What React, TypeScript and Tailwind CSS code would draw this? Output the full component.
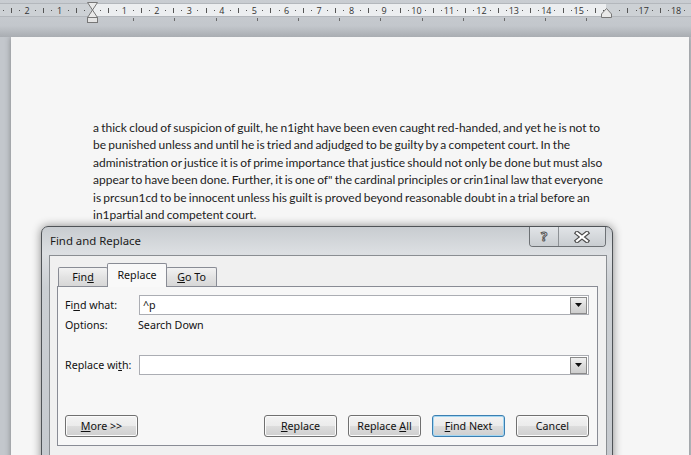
import React from 'react';

const CM = 32.45;
const ZERO = 92;

const lines = [
  'a thick cloud of suspicion of guilt, he n1ight have been even caught red-handed, and yet he is not to',
  'be punished unless and until he is tried and adjudged to be guilty by a competent court. In the',
  'administration or justice it is of prime importance that justice should not only be done but must also',
  'appear to have been done. Further, it is one of" the cardinal principles or crin1inal law that everyone',
  'is prcsun1cd to be innocent unless his guilt is proved beyond reasonable doubt in a trial before an',
  'in1partial and competent court.',
];

function Ruler() {
  const marks: React.ReactNode[] = [];
  for (let q = -12; q <= 78; q++) {
    const x = ZERO + (q / 4) * CM;
    if (x < 2 || x > 689 || q === 0 || q === 64) continue;
    const r = ((q % 4) + 4) % 4;
    if (r === 0) {
      marks.push(
        <span
          key={q}
          className="absolute top-0 -translate-x-1/2 text-[9px] leading-[13px] text-[#333]"
          style={{ left: x }}
        >
          {Math.abs(q / 4)}
        </span>,
      );
    } else if (r === 2) {
      marks.push(<span key={q} className="absolute top-[4px] h-[5px] w-px bg-[#555]" style={{ left: x }} />);
    } else {
      marks.push(<span key={q} className="absolute top-[6px] h-px w-px bg-[#555]" style={{ left: x }} />);
    }
  }
  const tabs = Array.from({ length: 12 }, (_, k) => ZERO + (k + 1) * 41.2);

  return (
    <div className="relative h-[37px] bg-[linear-gradient(to_bottom,#c9cdd2,#c3c7cc_70%,#a9adb2)]">
      <div className="absolute left-0 right-0 top-[3px] flex h-[14px] border-y border-[#b3b7bc]">
        <div className="w-[92px] bg-[#cdd1d5]" />
        <div className="w-[514px] bg-[#eceef0]" />
        <div className="flex-1 bg-[#cdd1d5]" />
        <div className="absolute inset-0 font-['Open_Sans',sans-serif]">{marks}</div>
      </div>
      {tabs.map((x) => (
        <span key={x} className="absolute top-[18px] h-[3px] w-px bg-[#6a6a6a]" style={{ left: x }} />
      ))}
      <svg className="absolute left-[87px] top-[2px]" width="11" height="21" viewBox="0 0 11 21">
        <path d="M0.5 0.5 H10.5 L5.5 8 Z" fill="#e9e9e9" stroke="#777" />
        <path d="M5.5 8 L10.5 15.5 H0.5 Z" fill="#e9e9e9" stroke="#777" />
        <rect x="0.5" y="15.5" width="10" height="5" fill="#e4e4e4" stroke="#777" />
      </svg>
      <svg className="absolute left-[601px] top-[8px]" width="11" height="10" viewBox="0 0 11 10">
        <path d="M0.5 9.5 V6 L5.5 0.5 L10.5 6 V9.5 Z" fill="#e9e9e9" stroke="#777" />
      </svg>
    </div>
  );
}

function DropButton() {
  return (
    <div className="my-px mr-px flex h-[17px] w-[17px] items-center justify-center border border-[#8a8a8a] bg-[linear-gradient(to_bottom,#f1f1f1,#dcdcdc_50%,#cdcdcd)]">
      <svg width="7" height="4" viewBox="0 0 7 4">
        <path d="M0 0 H7 L3.5 4 Z" fill="#111" />
      </svg>
    </div>
  );
}

function Btn({ children, primary }: { children: React.ReactNode; primary?: boolean }) {
  return (
    <div
      className={`flex h-[22px] w-[73px] items-center justify-center rounded-[3px] border bg-[linear-gradient(to_bottom,#f3f3f3,#ebebeb_50%,#dddddd_50%,#cfcfcf)] ${
        primary
          ? 'border-[#3c7fb1] shadow-[inset_0_0_0_1px_#a3d7f3]'
          : 'border-[#707070] shadow-[inset_0_0_0_1px_#fbfbfb]'
      }`}
    >
      {children}
    </div>
  );
}

function Dialog() {
  return (
    <div className="absolute left-[41px] top-[226px] flex h-[240px] w-[572px] flex-col rounded-t-[7px] border border-[#4f5357] bg-[linear-gradient(to_bottom,#c8ccd0,#dcdfe2_26px,#cbcfd3_60px,#c6cacf)] pl-[7px] pr-[5px] font-['Noto_Sans',sans-serif] text-[10.7px] text-[#111] shadow-[0_0_10px_rgba(0,0,0,0.45)]">
      <div className="flex h-[28px] items-center pl-px text-[11.4px] text-[#1a1a1a]">Find and Replace</div>
      <div className="absolute right-[6px] top-0 flex h-[20px] overflow-hidden rounded-b-[4px] border border-t-0 border-[#6d7175]">
        <div className="flex w-[29px] items-center justify-center border-r border-[#8d9195] bg-[linear-gradient(to_bottom,#e1e4e7,#c9cdd1)] text-[13px] font-bold text-white [-webkit-text-stroke:1px_#555]">
          ?
        </div>
        <div className="flex w-[46px] items-center justify-center bg-[linear-gradient(to_bottom,#e1e4e7,#c9cdd1)]">
          <svg width="16" height="12" viewBox="0 0 16 12">
            <path d="M3 2 L13 10 M13 2 L3 10" stroke="#4d4d4d" strokeWidth="4.5" strokeLinecap="square" />
            <path d="M3 2 L13 10 M13 2 L3 10" stroke="#fff" strokeWidth="2.2" strokeLinecap="square" />
          </svg>
        </div>
      </div>

      <div className="flex-1 border border-[#8a8e92] bg-[#f0f0f0] pl-[7px] pr-[8px] pt-[7px]">
        <div className="ml-px flex h-[23px] items-end">
          <div className="flex h-[19px] w-[50px] items-center justify-center rounded-t-[2px] border border-b-0 border-[#898c95] bg-[linear-gradient(to_bottom,#f2f2f2,#e3e3e3_50%,#d7d7d7)]">
            Fin<u>d</u>
          </div>
          <div className="relative z-10 -mb-px -ml-px flex h-[24px] w-[60px] items-start justify-center rounded-t-[2px] border border-b-0 border-[#898c95] bg-[#f9f9f9] pt-[3px]">
            Replace
          </div>
          <div className="-ml-px flex h-[19px] w-[51px] items-center justify-center rounded-t-[2px] border border-b-0 border-[#898c95] bg-[linear-gradient(to_bottom,#f2f2f2,#e3e3e3_50%,#d7d7d7)]">
            <u>G</u>o To
          </div>
        </div>
        <div className="flex h-[160px] flex-col border border-[#898c95] bg-[#f7f7f7] pl-[7px] pr-[8px] pt-[8px]">
          <div className="flex h-[20px] items-center">
            <span className="w-[74px]">
              Fi<u>n</u>d what:
            </span>
            <div className="flex h-[20px] flex-1 items-center border border-[#abadb3] bg-white">
              <span className="flex-1 pl-[3px]">^p</span>
              <DropButton />
            </div>
          </div>
          <div className="flex h-[20px] items-center">
            <span className="w-[73px]">Options:</span>
            <span>Search Down</span>
          </div>
          <div className="mt-[20px] flex h-[20px] items-center">
            <span className="w-[74px]">
              Replace wi<u>t</u>h:
            </span>
            <div className="flex h-[20px] flex-1 items-center border border-[#abadb3] bg-white">
              <span className="flex-1" />
              <DropButton />
            </div>
          </div>
          <div className="mt-[40px] flex justify-between">
            <Btn>
              <span>
                <u>M</u>ore &gt;&gt;
              </span>
            </Btn>
            <div className="flex gap-[11px]">
              <Btn>
                <span>
                  <u>R</u>eplace
                </span>
              </Btn>
              <Btn>
                <span>
                  Replace <u>A</u>ll
                </span>
              </Btn>
              <Btn primary>
                <span>
                  <u>F</u>ind Next
                </span>
              </Btn>
              <Btn>
                <span>Cancel</span>
              </Btn>
            </div>
          </div>
        </div>
      </div>
    </div>
  );
}

export default function App() {
  return (
    <div className="relative h-[455px] w-[691px] overflow-hidden bg-[#c3c7cc] font-['Lato',sans-serif]">
      <Ruler />
      <div className="flex pl-[11px] pr-[2px]">
        <div className="h-[430px] flex-1 bg-[#f6f6f6] pl-[82px] pt-[82px] text-[12px] leading-[17.4px] text-[#1c1c1c] shadow-[0_0_6px_rgba(0,0,0,0.35)] [word-spacing:-0.8px]">
          {lines.map((l) => (
            <div key={l} className="whitespace-nowrap">
              {l}
            </div>
          ))}
        </div>
      </div>
      <Dialog />
    </div>
  );
}
